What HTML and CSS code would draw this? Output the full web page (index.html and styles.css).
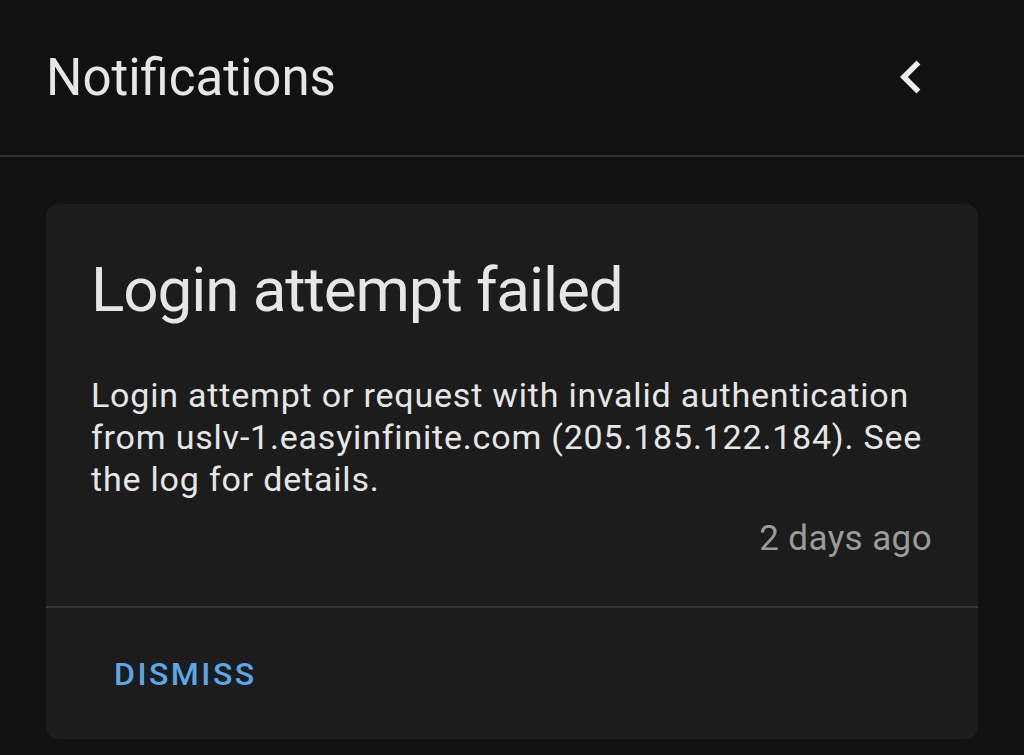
FILE: index.html
```html
<!DOCTYPE html>
<html lang="en">
<head>
<meta charset="utf-8">
<title>Notifications</title>
<link rel="stylesheet" href="styles.css">
</head>
<body>
<header class="topbar">
  <h1 class="topbar-title">Notifications</h1>
  <button class="back-btn" aria-label="Close">
    <svg viewBox="0 0 24 24" class="back-icon"><path d="M15.41,16.58L10.83,12L15.41,7.41L14,6L8,12L14,18L15.41,16.58Z"/></svg>
  </button>
</header>
<main class="content">
  <section class="card">
    <div class="card-body">
      <h2 class="card-title">Login attempt failed</h2>
      <p class="card-text">Login attempt or request with invalid authentication from uslv-1.easyinfinite.com (205.185.122.184). See the log for details.</p>
      <div class="card-time">2 days ago</div>
    </div>
    <div class="card-actions">
      <button class="dismiss-btn">Dismiss</button>
    </div>
  </section>
</main>
</body>
</html>
```
FILE: styles.css
```css
html, body {
  margin: 0;
  padding: 0;
  background: #111111;
  font-family: Roboto, "Liberation Sans", sans-serif;
  color: #e1e1e1;
}
.topbar {
  height: 155px;
  border-bottom: 2px solid #2e2e2e;
  display: flex;
  align-items: center;
  justify-content: space-between;
  padding: 0 80px 0 46px;
}
.topbar-title {
  margin: 0;
  font-size: 51px;
  font-weight: 400;
  line-height: 60px;
  color: #e6e6e6;
}
.back-btn {
  width: 66px;
  height: 66px;
  padding: 0;
  border: none;
  background: none;
  margin-top: -2px;
}
.back-icon {
  width: 66px;
  height: 66px;
  display: block;
  fill: #eeeeee;
}
.content {
  padding: 47px 46px 0 46px;
}
.card {
  background: #1c1c1c;
  border-radius: 12px;
  overflow: hidden;
}
.card-body {
  padding: 50px 46px 46px 45px;
  border-bottom: 2px solid #363636;
}
.card-title {
  margin: 0;
  font-size: 62px;
  font-weight: 400;
  line-height: 72px;
  letter-spacing: -1.1px;
  color: #e6e6e6;
}
.card-text {
  margin: 48px 0 0 0;
  font-size: 34px;
  line-height: 42px;
  letter-spacing: 0.8px;
  color: #e6e6e6;
}
.card-time {
  margin-top: 18px;
  text-align: right;
  font-size: 35px;
  line-height: 42px;
  letter-spacing: 0.4px;
  color: #9b9b9b;
}
.card-actions {
  height: 131px;
  display: flex;
  align-items: center;
  padding: 0 20px 0 42px;
}
.dismiss-btn {
  border: none;
  background: none;
  font-family: Roboto, "Liberation Sans", sans-serif;
  font-size: 32px;
  font-weight: 500;
  letter-spacing: 2.5px;
  text-transform: uppercase;
  color: #5aa8e6;
  padding: 0 26px;
  line-height: 40px;
}
```
